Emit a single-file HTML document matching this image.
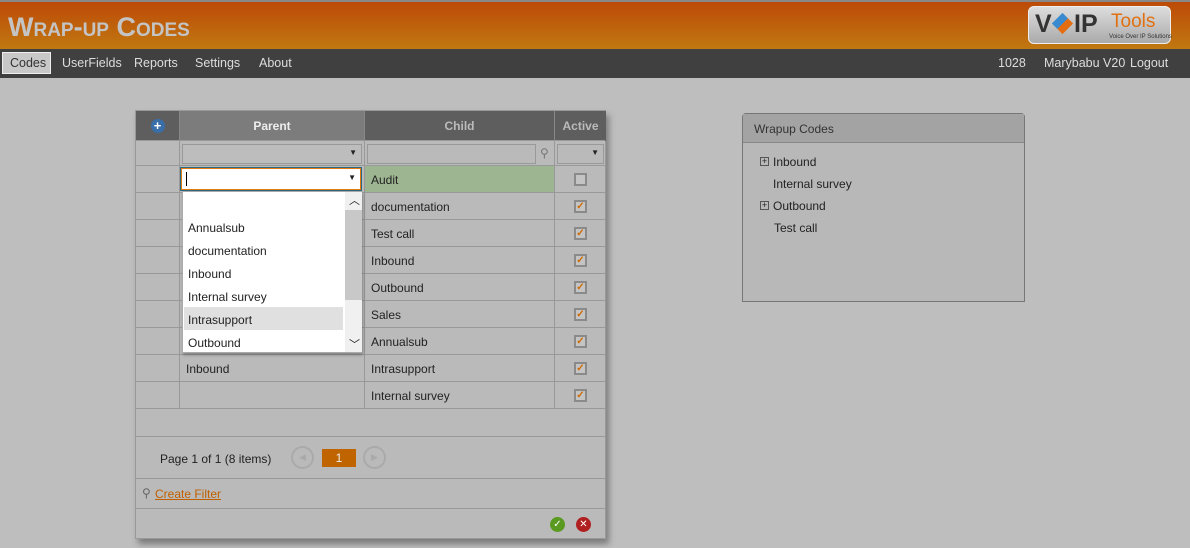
<!DOCTYPE html>
<html><head><style>
*{box-sizing:border-box;margin:0;padding:0}
body{width:1190px;height:548px;background:#bebebe;font-family:"Liberation Sans",sans-serif;font-size:12px;color:#222;position:relative;overflow:hidden}
.hdr{position:absolute;left:0;top:0;width:1190px;height:49px;background:linear-gradient(#bd4a08,#c07810);border-top:2px solid #888}
.title{position:absolute;left:8px;top:10px;font:bold 27px "Liberation Sans",sans-serif;color:#c4c4c4;font-variant:small-caps;letter-spacing:0px}
.logo{position:absolute;left:1028px;top:4px;width:143px;height:38px;background:linear-gradient(#ddd,#aaa);border-radius:6px;border:1px solid #eee}
.nav{position:absolute;left:0;top:49px;width:1190px;height:29px;background:#404040;color:#ddd;font-size:12.5px}
.nav span{position:absolute;top:7px}
.a{position:absolute}
.grid{position:absolute;left:135px;top:110px;width:471px;height:429px;background:#bababa;border:1px solid #999;box-shadow:3px 5px 6px rgba(0,0,0,.35)}
.th{position:absolute;top:0;height:30px;background:#5e5e5e;color:#bbb;font-weight:bold;text-align:center;line-height:30px;border-right:1px solid #888}
.hl{position:absolute;height:1px;background:#999;left:0;width:469px}
.vl{position:absolute;width:1px;background:#999}
.cb{position:absolute;left:438px;width:13px;height:13px;border:2px solid #8a8a8a;background:#c4c4c4;color:#d06a00;font-size:10px;line-height:9px;text-align:center;font-weight:bold}
.txt{position:absolute;font-size:12px}
</style></head><body>
<div class="hdr"><div class="title">Wrap-up Codes</div>
<div class="logo"><span class="a" style="left:6px;top:3px;font:bold 25px 'Liberation Sans';color:#333">V</span><span class="a" style="left:26px;top:9px;width:15px;height:15px;transform:rotate(45deg);background:linear-gradient(90deg,#3a8ad0 50%,#e36d10 50%)"></span><span class="a" style="left:45px;top:3px;font:bold 25px 'Liberation Sans';color:#333">IP</span><span class="a" style="left:82px;top:4px;font:19px 'Liberation Sans';color:#e07010">Tools</span><span class="a" style="left:80px;top:27px;font-size:6px;color:#333;white-space:nowrap">Voice Over IP Solutions</span></div></div>
<div class="nav"><span style="left:2px;top:3px;width:49px;height:22px;background:#c8c8c8;color:#333;border:1px solid #eee;padding:3px 0 0 7px">Codes</span><span style="left:62px">UserFields</span><span style="left:134px">Reports</span><span style="left:195px">Settings</span><span style="left:259px">About</span><span style="left:998px">1028</span><span style="left:1044px">Marybabu V20</span><span style="left:1130px">Logout</span></div>

<div class="grid">
<div class="th" style="left:0;width:44px"><span style="display:inline-block;width:14px;height:14px;border-radius:50%;background:#3a6ea8;color:#fff;line-height:13px;font-size:13px;margin-top:8px">+</span></div>
<div class="th" style="left:44px;width:185px;background:#7c7c7c;color:#eee">Parent</div>
<div class="th" style="left:229px;width:190px">Child</div>
<div class="th" style="left:419px;width:51px;border:0">Active</div>
<div class="a" style="left:46px;top:33px;width:180px;height:20px;border:1px solid #999;background:#bdbdbd"><span class="a" style="right:4px;top:3px;font-size:8px">▼</span></div>
<div class="a" style="left:231px;top:33px;width:169px;height:20px;border:1px solid #999"></div>
<span class="a" style="left:404px;top:35px;color:#777">⚲</span>
<div class="a" style="left:421px;top:33px;width:47px;height:20px;border:1px solid #999"><span class="a" style="right:4px;top:3px;font-size:8px">▼</span></div>
<div class="hl" style="top:29px"></div><div class="hl" style="top:54px"></div>
<div class="hl" style="top:81px"></div><div class="hl" style="top:108px"></div><div class="hl" style="top:135px"></div><div class="hl" style="top:162px"></div><div class="hl" style="top:189px"></div><div class="hl" style="top:216px"></div><div class="hl" style="top:243px"></div><div class="hl" style="top:270px"></div><div class="hl" style="top:297px"></div>
<div class="hl" style="top:325px"></div><div class="hl" style="top:367px"></div><div class="hl" style="top:397px"></div>
<div class="vl" style="left:43px;top:30px;height:268px"></div><div class="vl" style="left:228px;top:30px;height:268px"></div><div class="vl" style="left:418px;top:30px;height:268px"></div>
<div class="a" style="left:229px;top:55px;width:189px;height:26px;background:#9db591"></div>
<div class="a" style="left:45px;top:57px;width:180px;height:22px;border:1px solid #e57a10;background:#fff;outline:1px solid #2a6a80"><span class="a" style="left:4px;top:3px;width:1px;height:14px;background:#000"></span><span class="a" style="right:4px;top:4px;font-size:8px">▼</span></div>
<span class="txt" style="left:235px;top:62px">Audit</span>
<span class="txt" style="left:235px;top:89px">documentation</span>
<span class="txt" style="left:235px;top:116px">Test call</span>
<span class="txt" style="left:235px;top:143px">Inbound</span>
<span class="txt" style="left:235px;top:170px">Outbound</span>
<span class="txt" style="left:235px;top:197px">Sales</span>
<span class="txt" style="left:235px;top:224px">Annualsub</span>
<span class="txt" style="left:235px;top:251px">Intrasupport</span>
<span class="txt" style="left:235px;top:278px">Internal survey</span>
<span class="txt" style="left:50px;top:251px">Inbound</span>
<div class="cb" style="top:62px"></div><div class="cb" style="top:89px">✓</div><div class="cb" style="top:116px">✓</div><div class="cb" style="top:143px">✓</div><div class="cb" style="top:170px">✓</div><div class="cb" style="top:197px">✓</div><div class="cb" style="top:224px">✓</div><div class="cb" style="top:251px">✓</div><div class="cb" style="top:278px">✓</div>
<div class="a" style="left:46px;top:80px;width:180px;height:162px;background:#fff;border:1px solid #aaa;box-shadow:1px 2px 3px rgba(0,0,0,.3)">
<div class="a" style="left:162px;top:0;width:17px;height:160px;background:#f0f0f0"></div>
<div class="a" style="left:162px;top:18px;width:17px;height:90px;background:#c8c8c8"></div>
<span class="a" style="left:166px;top:0;font-size:11px">︿</span><span class="a" style="left:166px;top:144px;font-size:11px">﹀</span>
<div class="a" style="left:1px;top:115px;width:159px;height:23px;background:#e0e0e0"></div>
<span class="txt" style="left:5px;top:29px">Annualsub</span><span class="txt" style="left:5px;top:52px">documentation</span><span class="txt" style="left:5px;top:75px">Inbound</span><span class="txt" style="left:5px;top:98px">Internal survey</span><span class="txt" style="left:5px;top:121px">Intrasupport</span><span class="txt" style="left:5px;top:144px">Outbound</span></div>
<span class="txt" style="left:24px;top:341px">Page 1 of 1 (8 items)</span>
<div class="a" style="left:155px;top:335px;width:23px;height:23px;border:2px solid #aaa;border-radius:50%;color:#aaa;font-size:9px;text-align:center;line-height:19px">◀</div>
<div class="a" style="left:186px;top:338px;width:34px;height:18px;background:#c06400;color:#eee;text-align:center;line-height:18px">1</div>
<div class="a" style="left:227px;top:335px;width:23px;height:23px;border:2px solid #aaa;border-radius:50%;color:#aaa;font-size:9px;text-align:center;line-height:19px">▶</div>
<span class="txt" style="left:6px;top:375px;color:#666">⚲</span><span class="txt" style="left:19px;top:376px;color:#c06000;text-decoration:underline">Create Filter</span>
<div class="a" style="left:414px;top:406px;width:15px;height:15px;border-radius:50%;background:#5a9a20;color:#fff;font-size:10px;text-align:center;line-height:15px">✓</div>
<div class="a" style="left:440px;top:406px;width:15px;height:15px;border-radius:50%;background:#b02020;color:#fff;font-size:10px;text-align:center;line-height:15px">✕</div>
</div>

<div class="a" style="left:742px;top:113px;width:283px;height:189px;border:1px solid #777;border-radius:4px 4px 0 0;background:#b8b8b8">
<div style="height:29px;background:#a3a3a3;border-bottom:1px solid #888;padding:8px 0 0 11px;font-size:12px;color:#333">Wrapup Codes</div>
<span class="a" style="left:17px;top:43px;width:9px;height:9px;border:1px solid #555;font-size:9px;line-height:7px;text-align:center">+</span><span class="txt" style="left:30px;top:41px">Inbound</span>
<span class="txt" style="left:30px;top:63px">Internal survey</span>
<span class="a" style="left:17px;top:87px;width:9px;height:9px;border:1px solid #555;font-size:9px;line-height:7px;text-align:center">+</span><span class="txt" style="left:30px;top:85px">Outbound</span>
<span class="txt" style="left:31px;top:107px">Test call</span></div>
</body></html>
